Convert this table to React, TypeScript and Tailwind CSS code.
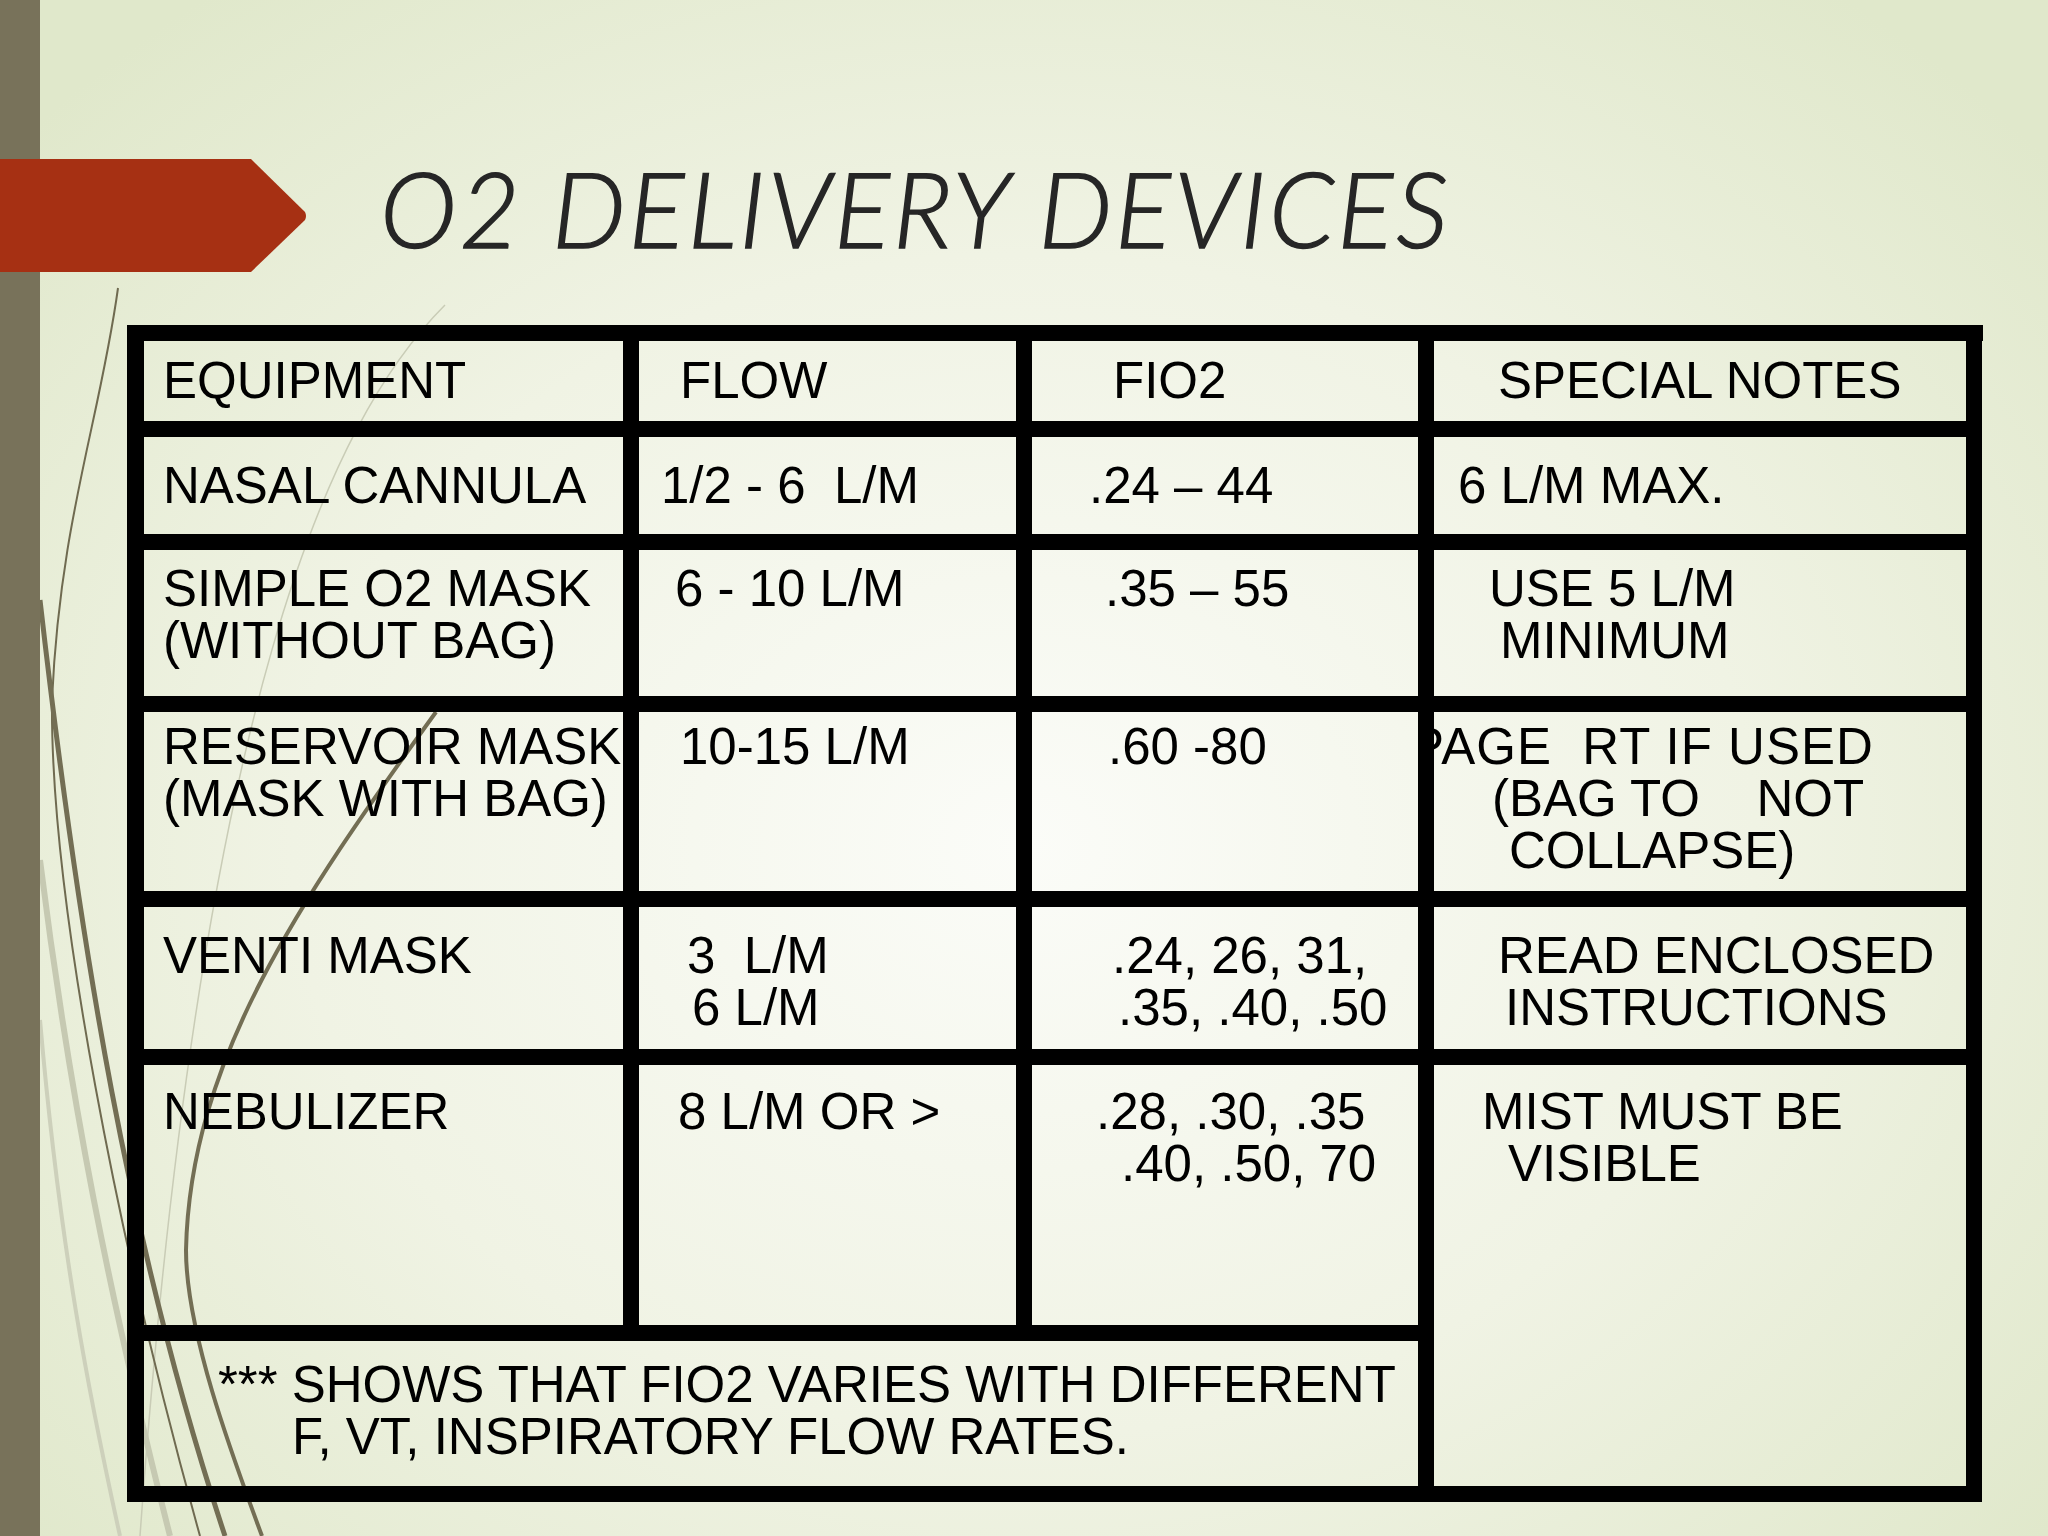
type Line = { text: string; cls: string };

function Cell({ lines, className }: { lines: Line[]; className: string }) {
  return (
    <div className={"border-r-[16px] border-b-[16px] border-black overflow-hidden " + className}>
      {lines.map((l, i) => (
        <div key={i} className={"whitespace-pre " + l.cls}>
          {l.text}
        </div>
      ))}
    </div>
  );
}

export default function App() {
  return (
    <div className="relative w-[2048px] h-[1536px] overflow-hidden flex bg-[radial-gradient(ellipse_65%_70%_at_50%_55%,#fbfcf8_0%,#f0f3e4_55%,#e0e8cb_100%)] font-['Liberation_Sans',Arial,sans-serif]">
      {/* wisp stems behind the table */}
      <svg className="absolute left-0 top-0 z-0" width="700" height="1536" viewBox="0 0 700 1536" fill="none">
        <path d="M445 305 C 330 420, 200 700, 140 1536" stroke="#c9ccb6" strokeWidth="1.5" />
        <path d="M40 860 C 70 1100, 110 1300, 170 1536" stroke="#c6c9b2" strokeWidth="6" />
        <path d="M40 1020 C 60 1250, 90 1400, 120 1536" stroke="#cdd0bb" strokeWidth="4" />
        <path d="M118 288 C 100 420, 60 520, 52 700 C 50 900, 120 1250, 200 1536" stroke="#6f6a50" strokeWidth="2" />
        <path d="M40 600 C 80 950, 130 1250, 225 1536" stroke="#736e54" strokeWidth="5" />
        <path d="M436 712 C 300 900, 190 1060, 186 1250 C 186 1330, 230 1450, 262 1536" stroke="#736e54" strokeWidth="4" />
      </svg>

      <div className="relative z-20 w-[40px] shrink-0 bg-[#78725a]" />

      {/* red chevron */}
      <svg className="absolute left-0 top-[159px] z-30" width="310" height="114" viewBox="0 0 310 114">
        <path d="M0 0 H251 L305 53 Q307 57 305 61 L251 113 H0 Z" fill="#a63013" />
      </svg>

      <div className="relative z-10 flex-1 flex flex-col pt-[156px]">
        <h1 className="ml-[340px] text-[104px] leading-[104px] italic font-light text-[#262626] font-['Lato',sans-serif] tracking-[3px] [-webkit-text-stroke:1.5px_#262626]">
          O2 DELIVERY DEVICES
        </h1>

        <div className="mt-[65px] ml-[87px] w-[1856px] border-t-[16px] border-l-[17px] border-black grid grid-cols-[495px_393px_402px_548px] grid-rows-[96px_113px_162px_195px_158px_276px_161px] text-[51px] leading-[52px] text-black">
          <Cell className="pt-[14px]" lines={[{ text: "EQUIPMENT", cls: "pl-[19px]" }]} />
          <Cell className="pt-[14px]" lines={[{ text: "FLOW", cls: "pl-[41px]" }]} />
          <Cell className="pt-[14px]" lines={[{ text: "FIO2", cls: "pl-[81px]" }]} />
          <Cell className="pt-[14px]" lines={[{ text: "SPECIAL NOTES", cls: "pl-[64px]" }]} />

          <Cell className="pt-[23px]" lines={[{ text: "NASAL CANNULA", cls: "pl-[19px]" }]} />
          <Cell className="pt-[23px]" lines={[{ text: "1/2 - 6  L/M", cls: "pl-[22px]" }]} />
          <Cell className="pt-[23px]" lines={[{ text: ".24 – 44", cls: "pl-[57px]" }]} />
          <Cell className="pt-[23px]" lines={[{ text: "6 L/M MAX.", cls: "pl-[24px]" }]} />

          <Cell
            className="pt-[13px]"
            lines={[
              { text: "SIMPLE O2 MASK", cls: "pl-[19px]" },
              { text: "(WITHOUT BAG)", cls: "pl-[19px]" },
            ]}
          />
          <Cell className="pt-[13px]" lines={[{ text: "6 - 10 L/M", cls: "pl-[36px]" }]} />
          <Cell className="pt-[13px]" lines={[{ text: ".35 – 55", cls: "pl-[73px]" }]} />
          <Cell
            className="pt-[13px]"
            lines={[
              { text: "USE 5 L/M", cls: "pl-[55px]" },
              { text: "MINIMUM", cls: "pl-[66px]" },
            ]}
          />

          <Cell
            className="pt-[9px]"
            lines={[
              { text: "RESERVOIR MASK", cls: "pl-[19px]" },
              { text: "(MASK WITH BAG)", cls: "pl-[19px]" },
            ]}
          />
          <Cell className="pt-[9px]" lines={[{ text: "10-15 L/M", cls: "pl-[41px]" }]} />
          <Cell className="pt-[9px]" lines={[{ text: ".60 -80", cls: "pl-[76px]" }]} />
          <Cell
            className="pt-[9px]"
            lines={[
              { text: "PAGE  RT IF USED", cls: "-ml-[24px] tracking-[1px]" },
              { text: "(BAG TO    NOT", cls: "pl-[58px]" },
              { text: "COLLAPSE)", cls: "pl-[75px]" },
            ]}
          />

          <Cell className="pt-[23px]" lines={[{ text: "VENTI MASK", cls: "pl-[19px]" }]} />
          <Cell
            className="pt-[23px]"
            lines={[
              { text: "3  L/M", cls: "pl-[48px]" },
              { text: "6 L/M", cls: "pl-[53px]" },
            ]}
          />
          <Cell
            className="pt-[23px]"
            lines={[
              { text: ".24, 26, 31,", cls: "pl-[80px]" },
              { text: ".35, .40, .50", cls: "pl-[86px]" },
            ]}
          />
          <Cell
            className="pt-[23px]"
            lines={[
              { text: "READ ENCLOSED", cls: "pl-[64px]" },
              { text: "INSTRUCTIONS", cls: "pl-[71px]" },
            ]}
          />

          <Cell className="pt-[21px]" lines={[{ text: "NEBULIZER", cls: "pl-[19px]" }]} />
          <Cell className="pt-[21px]" lines={[{ text: "8 L/M OR >", cls: "pl-[39px]" }]} />
          <Cell
            className="pt-[21px]"
            lines={[
              { text: ".28, .30, .35", cls: "pl-[64px]" },
              { text: ".40, .50, 70", cls: "pl-[89px]" },
            ]}
          />
          <Cell
            className="pt-[21px] row-span-2"
            lines={[
              { text: "MIST MUST BE", cls: "pl-[48px]" },
              { text: "VISIBLE", cls: "pl-[74px]" },
            ]}
          />

          <Cell
            className="pt-[18px] col-span-3"
            lines={[
              { text: "*** SHOWS THAT FIO2 VARIES WITH DIFFERENT", cls: "pl-[74px]" },
              { text: "F, VT, INSPIRATORY FLOW RATES.", cls: "pl-[148px]" },
            ]}
          />
        </div>
      </div>
    </div>
  );
}
